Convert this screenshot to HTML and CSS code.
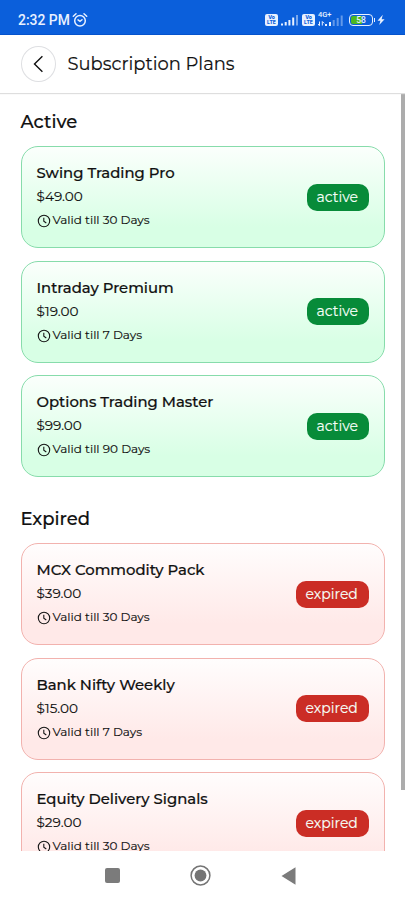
FILE: index.html
```html
<!DOCTYPE html>
<html lang="en">
<head>
<meta charset="utf-8">
<meta name="viewport" content="width=device-width, initial-scale=1">
<title>Subscription Plans</title>
<link rel="stylesheet" href="styles.css">
</head>
<body>
<svg width="0" height="0" class="defs" aria-hidden="true">
  <symbol id="clock" viewBox="0 0 14 14"><circle cx="7" cy="7" r="5.7" fill="none" stroke="#161616" stroke-width="1.1"/><path d="M6.8 3.7v3.6l2.5 1.7" fill="none" stroke="#161616" stroke-width="1.1"/></symbol>
</svg>
<header class="status">
  <span class="time">2:32 PM</span>
  <svg class="alarm" width="16" height="16" viewBox="0 0 16 16" fill="none" stroke="#e8f1ff" stroke-width="1.5" stroke-linecap="round"><circle cx="8" cy="8.7" r="5.3"/><path d="M1.3 4.2 4 1.8M14.7 4.2 12 1.8M6 7.9l2 1.5 2-1.7"/></svg>
  <span class="volte"><span>Vo</span><span>LTE</span></span>
  <svg class="bars" width="18" height="12" viewBox="0 0 18 12" fill="#e8f1ff"><rect x="0" y="9.5" width="2" height="2"/><rect x="3.7" y="8" width="2" height="3.5"/><rect x="7.4" y="6" width="2" height="5.5"/><rect x="11.2" y="3.5" width="2" height="8"/><rect x="15" y="1" width="2" height="10.5" opacity=".5"/></svg>
  <span class="volte"><span>Vo</span><span>LTE</span></span>
  <span class="mobile">
    <span class="net">4G+</span>
    <svg width="26" height="14" viewBox="0 0 26 14" fill="#e8f1ff"><path d="M1.5 8.5v4M0 11l1.5 1.8M4.3 12.5v-4l1.8 1.8" stroke="#e8f1ff" fill="none"/><rect x="7" y="11" width="2" height="2"/><rect x="11" y="9" width="2" height="4"/><rect x="14.7" y="7" width="2" height="6" opacity=".4"/><rect x="18.7" y="5" width="2" height="8" opacity=".4"/><rect x="22.7" y="2.5" width="2" height="10.5" opacity=".4"/></svg>
  </span>
  <span class="battery">58</span>
  <svg class="bolt" width="8" height="12" viewBox="0 0 8 12"><path d="M5.8.8.5 6.7h2.9L2.2 11 7.6 5.2H4.6z" fill="#e8f1ff"/></svg>
</header>
<nav class="appbar">
  <button class="back" aria-label="Back"><svg width="18" height="20" viewBox="0 0 18 20"><path d="M12.4 2.3 4.5 10l7.9 7.7" fill="none" stroke="#111" stroke-width="1.4"/></svg></button>
  <h1>Subscription Plans</h1>
</nav>
<main>
  <div class="scrollbar"></div>
  <section>
    <h2>Active</h2>
    <article class="card active"><div><h3>Swing Trading Pro</h3><p class="price">$49.00</p><p class="valid"><svg width="14" height="14"><use href="#clock"/></svg>Valid till 30 Days</p></div><span class="badge">active</span></article>
    <article class="card active"><div><h3>Intraday Premium</h3><p class="price">$19.00</p><p class="valid"><svg width="14" height="14"><use href="#clock"/></svg>Valid till 7 Days</p></div><span class="badge">active</span></article>
    <article class="card active"><div><h3>Options Trading Master</h3><p class="price">$99.00</p><p class="valid"><svg width="14" height="14"><use href="#clock"/></svg>Valid till 90 Days</p></div><span class="badge">active</span></article>
  </section>
  <section class="second-section">
    <h2>Expired</h2>
    <article class="card expired"><div><h3>MCX Commodity Pack</h3><p class="price">$39.00</p><p class="valid"><svg width="14" height="14"><use href="#clock"/></svg>Valid till 30 Days</p></div><span class="badge">expired</span></article>
    <article class="card expired"><div><h3>Bank Nifty Weekly</h3><p class="price">$15.00</p><p class="valid"><svg width="14" height="14"><use href="#clock"/></svg>Valid till 7 Days</p></div><span class="badge">expired</span></article>
    <article class="card expired"><div><h3>Equity Delivery Signals</h3><p class="price">$29.00</p><p class="valid"><svg width="14" height="14"><use href="#clock"/></svg>Valid till 30 Days</p></div><span class="badge">expired</span></article>
  </section>
</main>
<footer class="sysnav">
  <svg width="15" height="15" viewBox="0 0 15 15"><rect width="15" height="15" rx="2" fill="#7b7b7b"/></svg>
  <svg width="21" height="21" viewBox="0 0 21 21"><circle cx="10.5" cy="10.5" r="9.4" fill="none" stroke="#747474" stroke-width="1.5"/><circle cx="10.5" cy="10.5" r="5.9" fill="#747474"/></svg>
  <svg width="15" height="18" viewBox="0 0 15 18"><path d="M14.5.3v17.4L.5 9z" fill="#7b7b7b"/></svg>
</footer>
</body>
</html>
```
FILE: styles.css
```css
* { box-sizing: border-box; }
html, body { height: 100%; }
body {
  margin: 0;
  display: flex;
  flex-direction: column;
  overflow: hidden;
  background: #fff;
  color: #111;
  font-family: Montserrat, Inter, sans-serif;
}
h1, h2, h3, p { margin: 0; white-space: nowrap; }
.defs { position: absolute; }

.status {
  height: 35px;
  flex: none;
  display: flex;
  align-items: center;
  padding: 5px 0 0 18px;
  background: #0b5fdb;
  border-bottom: 1px solid #0553cc;
  color: #e8f1ff;
}
.time { width: 54px; font: 500 13.9px/16px Roboto, sans-serif; padding-top: 1px; white-space: nowrap; }
.alarm { margin-right: 177px; flex: none; }
.volte {
  width: 13px;
  height: 12px;
  flex: none;
  display: flex;
  flex-direction: column;
  align-items: center;
  justify-content: center;
  border-radius: 2px;
  background: #e8f1ff;
  color: #0b5fdb;
  font: 800 5px/5px Inter, sans-serif;
}
.bars { margin: 0 3px 0 3px; flex: none; }
.mobile { position: relative; width: 26px; height: 14px; margin-left: 3px; flex: none; }
.mobile svg { display: block; }
.net { position: absolute; left: 0; top: -2px; font: 500 7.5px/8px Roboto, sans-serif; }
.battery {
  position: relative;
  width: 24px;
  height: 12px;
  margin-left: 5px;
  flex: none;
  border: 1px solid #e8f1ff;
  border-radius: 4px;
  background: linear-gradient(90deg, #4cb720 55%, #0b5fdb 55%) content-box;
  padding: 1px;
  text-align: center;
  font: 500 8.5px/9px Roboto, sans-serif;
}
.battery::after { content: ""; position: absolute; right: -3px; top: 3px; width: 1px; height: 4px; background: #e8f1ff; }
.bolt { margin-left: 4px; flex: none; }

.appbar {
  position: relative;
  z-index: 1;
  height: 58px;
  flex: none;
  display: flex;
  align-items: center;
  padding-left: 21px;
  background: #fff;
  box-shadow: 0 1px 1px #dedede;
}
.back {
  width: 35px;
  height: 36px;
  padding: 0;
  display: flex;
  align-items: center;
  justify-content: center;
  border: 1px solid #dedfe2;
  border-radius: 50%;
  background: #fff;
}
h1 { margin: 0 0 0 11.5px; font-size: 17.9px; font-weight: 400; line-height: 24px; -webkit-text-stroke: .15px #111; }

main { position: relative; flex: 1; min-height: 0; overflow: hidden; padding: 16px 20.5px 0; }
.scrollbar { position: absolute; right: 0; top: 0; width: 4px; height: 697px; background: #acacac; }
h2 { height: 24px; margin-bottom: 13.3px; font-size: 18px; font-weight: 500; line-height: 26px; -webkit-text-stroke: .15px #111; }
.second-section { padding-top: 15.9px; }
.card {
  height: 102px;
  margin-bottom: 12.6px;
  display: flex;
  align-items: center;
  justify-content: space-between;
  padding: 0 15px;
  border: 1px solid;
  border-radius: 17px;
}
.card.active { border-color: #87dcab; background: linear-gradient(#fbfffc, #d8ffe5 80%); }
.card.expired { border-color: #f2b2ae; background: linear-gradient(#fffdfd, #ffe9e8 80%); }
h3 { font-size: 14.85px; font-weight: 500; line-height: 23px; -webkit-text-stroke: .2px #111; }
.price { font-size: 13.6px; line-height: 23px; -webkit-text-stroke: .15px #111; }
.valid { display: flex; align-items: center; gap: 2px; font-size: 12px; line-height: 24px; -webkit-text-stroke: .15px #111; }
.valid svg { margin-top: 2px; }
.badge {
  height: 27px;
  padding: 0 10px;
  border-radius: 10px;
  color: #f6fff8;
  font-size: 14px;
  line-height: 26px;
  -webkit-text-stroke: .15px #f6fff8;
}
.active .badge { width: 62px; background: #078b39; }
.expired .badge { width: 73px; background: #cb2d25; }

.sysnav {
  height: 49px;
  flex: none;
  display: grid;
  grid-template-columns: 15px 21px 15px;
  column-gap: 70px;
  align-items: center;
  padding-left: 105px;
  background: #fff;
}
```
